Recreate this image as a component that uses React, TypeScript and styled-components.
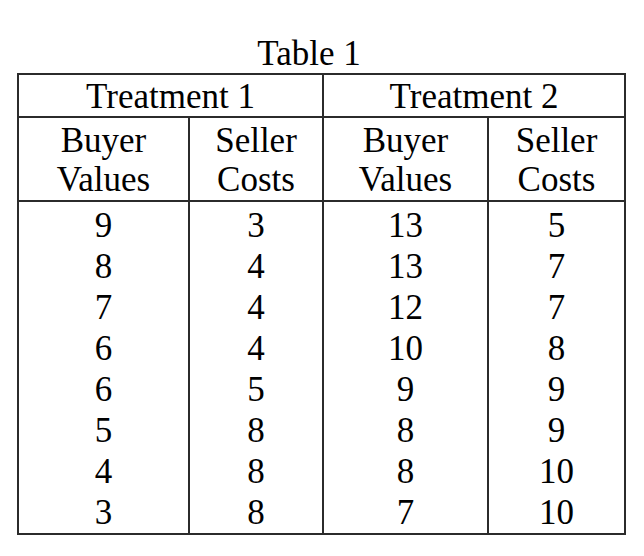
import React from "react";
import styled, { createGlobalStyle } from "styled-components";

const GlobalStyle = createGlobalStyle`
    html, body {
        margin: 0;
        padding: 0;
        background: #fff;
    }
    body {
        font-family: "Liberation Serif", "Times New Roman", serif;
        color: #000;
    }
`;

const LINE = '#2b2b2b';

const Page = styled.div`
    width: 644px;
    height: 556px;
    padding: 35px 0 0 17px;
    box-sizing: border-box;
    font-size: 35px;
`;

const Caption = styled.div`
    width: 609px;
    padding-right: 25px;
    box-sizing: border-box;
    text-align: center;
    line-height: 38px;
`;

const Grid = styled.div`
    display: grid;
    grid-template-columns: 169px 134px 165px 137px;
    width: max-content;
    border: 2px solid ${LINE};
`;

const Cell = styled.div<{ $divider?: boolean }>`
    box-sizing: border-box;
    text-align: center;
    border-left: ${(p) => (p.$divider ? `2px solid ${LINE}` : "none")};
`;

const GroupHead = styled(Cell)`
    grid-column: span 2;
    padding-top: 2px;
    line-height: 39px;
`;

const ColHead = styled(Cell)`
    border-top: 2px solid ${LINE};
    padding: 3px 0 1px;
    line-height: 39px;
`;

const DataCell = styled(Cell)<{ $first?: boolean }>`
    border-top: ${(p) => (p.$first ? `2px solid ${LINE}` : "none")};
    padding-top: ${(p) => (p.$first ? "3px" : "0")};
    line-height: 41px;
`;

const rows: number[][] = [
    [9, 3, 13, 5],
    [8, 4, 13, 7],
    [7, 4, 12, 7],
    [6, 4, 10, 8],
    [6, 5, 9, 9],
    [5, 8, 8, 9],
    [4, 8, 8, 10],
    [3, 8, 7, 10],
];

const heads = [
    ["Buyer", "Values"],
    ["Seller", "Costs"],
    ["Buyer", "Values"],
    ["Seller", "Costs"],
];

const App: React.FC = () => {
    return (
        <Page>
            <GlobalStyle />
            <Caption>Table 1</Caption>
            <Grid>
                <GroupHead>Treatment 1</GroupHead>
                <GroupHead $divider>Treatment 2</GroupHead>
                {heads.map((h, idx) => (
                    <ColHead key={idx} $divider={idx > 0}>
                        {h[0]}<br />{h[1]}
                    </ColHead>
                ))}
                {rows.map((row, r) =>
                    row.map((value, c) => (
                        <DataCell key={`${r}-${c}`} $divider={c > 0} $first={r === 0}>
                            {value}
                        </DataCell>
                    ))
                )}
            </Grid>
        </Page>
    );
};

export default App;
